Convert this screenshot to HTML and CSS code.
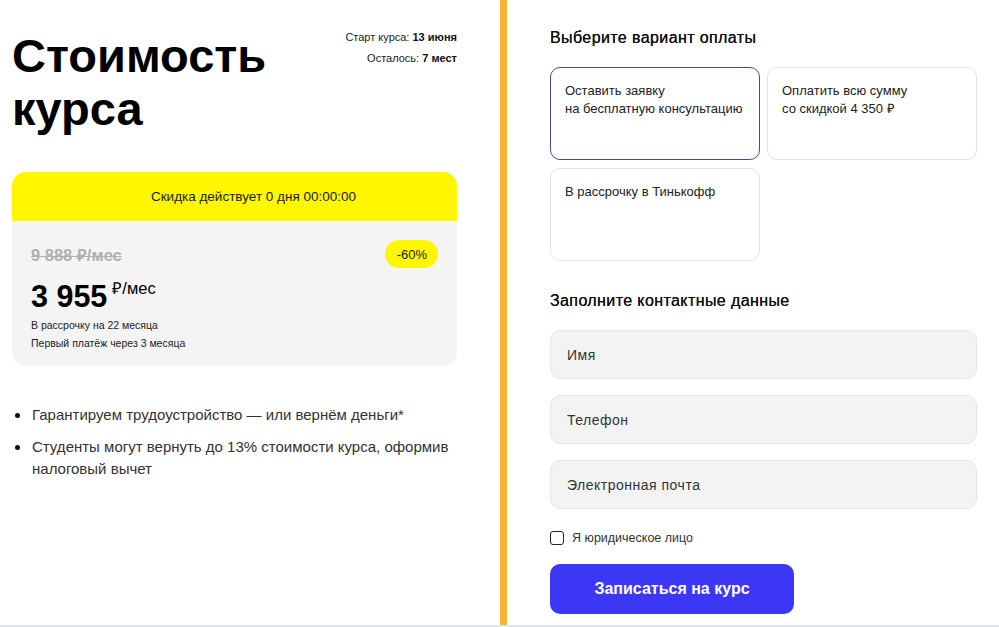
FILE: index.html
```html
<!DOCTYPE html>
<html lang="ru">
<head>
<meta charset="utf-8">
<title>Стоимость курса</title>
<link rel="stylesheet" href="styles.css">
</head>
<body>
<div class="page">
  <section class="left">
    <div class="head">
      <h1 class="title">Стоимость<br>курса</h1>
      <div class="info">
        <p>Старт курса: <b>13 июня</b></p>
        <p>Осталось: <b>7 мест</b></p>
      </div>
    </div>
    <div class="price-card">
      <div class="timer">Скидка действует 0 дня 00:00:00</div>
      <div class="price-body">
        <div class="old-row">
          <span class="old">9 888 ₽/мес</span>
          <span class="badge">-60%</span>
        </div>
        <div class="new"><span class="num">3 955</span><span class="unit">₽/мес</span></div>
        <p class="note">В рассрочку на 22 месяца</p>
        <p class="note">Первый платёж через 3 месяца</p>
      </div>
    </div>
    <ul class="perks">
      <li>Гарантируем трудоустройство — или вернём деньги*</li>
      <li>Студенты могут вернуть до 13% стоимости курса, оформив налоговый вычет</li>
    </ul>
  </section>
  <div class="divider"></div>
  <section class="right">
    <h2 class="sub">Выберите вариант оплаты</h2>
    <div class="options">
      <div class="opt active">Оставить заявку<br>на бесплатную консультацию</div>
      <div class="opt">Оплатить всю сумму<br>со скидкой 4 350 ₽</div>
      <div class="opt">В рассрочку в Тинькофф</div>
    </div>
    <h2 class="sub sub2">Заполните контактные данные</h2>
    <div class="fields">
      <div class="field">Имя</div>
      <div class="field">Телефон</div>
      <div class="field">Электронная почта</div>
    </div>
    <label class="check"><span class="box"></span>Я юридическое лицо</label>
    <button class="btn">Записаться на курс</button>
  </section>
</div>
<div class="footer-line"></div>
</body>
</html>
```
FILE: styles.css
```css
* { box-sizing: border-box; }
html, body { margin: 0; padding: 0; background: #fff; }
body {
  font-family: "Liberation Sans", Arial, sans-serif;
  color: #1a1a1a;
  width: 999px;
  height: 627px;
  overflow: hidden;
}
.page {
  display: flex;
  height: 625px;
}
.left {
  width: 500px;
  padding: 0 43px 0 12px;
}
.divider {
  width: 7px;
  background: #f8b42e;
}
.right {
  flex: 1;
  padding: 0 22px 0 43px;
}
.head {
  display: flex;
  justify-content: space-between;
  align-items: flex-start;
}
.title {
  margin: 29px 0 0 0;
  font-size: 47px;
  line-height: 53px;
  font-weight: 700;
  color: #000;
}
.info {
  margin-top: 27px;
  text-align: right;
  font-size: 11px;
  line-height: 21px;
  color: #222;
}
.info p { margin: 0; }
.info b { font-weight: 700; color: #111; }
.price-card {
  margin-top: 37px;
  border-radius: 14px;
  overflow: hidden;
  background: #f4f4f4;
}
.timer {
  height: 49px;
  background: #fff700;
  display: flex;
  align-items: center;
  justify-content: center;
  font-size: 13.5px;
  color: #1a1a1a;
  padding: 0 0 1px 38px;
}
.price-body {
  padding: 19px 19px 14px 19px;
}
.old-row {
  display: flex;
  justify-content: space-between;
  align-items: center;
  height: 28px;
}
.old {
  font-size: 16.5px;
  font-weight: 700;
  color: #b0b0b0;
  text-decoration: line-through;
  text-decoration-thickness: 1px;
}
.badge {
  background: #fff700;
  border-radius: 14px;
  height: 28px;
  padding: 0 11px 0 12px;
  display: flex;
  align-items: center;
  font-size: 13px;
  color: #1a1a1a;
}
.new {
  margin-top: 9px;
  display: flex;
  align-items: flex-start;
  height: 39px;
}
.num {
  font-size: 30.5px;
  line-height: 39px;
  font-weight: 700;
  color: #000;
}
.unit {
  font-size: 16.5px;
  line-height: 20px;
  margin-left: 5px;
  margin-top: 1px;
  color: #000;
}
.note {
  margin: 0;
  font-size: 10.5px;
  line-height: 18px;
  color: #222;
}
.perks {
  list-style: none;
  margin: 38px 0 0 0;
  padding: 0 0 0 20px;
  font-size: 15px;
  line-height: 22px;
  color: #333;
}
.perks li {
  margin-bottom: 10px;
  position: relative;
}
.perks li::before {
  content: "";
  position: absolute;
  left: -17px;
  top: 9px;
  width: 5px;
  height: 5px;
  border-radius: 50%;
  background: #111;
}
.sub {
  margin: 28px 0 0 0;
  font-size: 16px;
  line-height: 20px;
  font-weight: 500;
  color: #111;
  letter-spacing: 0.4px;
  text-shadow: 0 0 0.3px #111;
}
.options {
  margin-top: 19px;
  display: grid;
  grid-template-columns: 210px 210px;
  grid-auto-rows: 93px;
  gap: 8px 7px;
}
.opt {
  border: 1px solid #e3e3e3;
  border-radius: 10px;
  padding: 14px 14px;
  font-size: 13px;
  line-height: 18px;
  color: #222;
}
.opt.active { border-color: #4d45a6; }
.sub2 { margin-top: 30px; }
.fields {
  margin-top: 19px;
  display: flex;
  flex-direction: column;
  gap: 16px;
}
.field {
  height: 49px;
  background: #f3f3f3;
  border: 1px solid #e7e7e7;
  border-radius: 10px;
  display: flex;
  align-items: center;
  padding-left: 16px;
  font-size: 14px;
  color: #333;
  letter-spacing: 0.5px;
}
.check {
  margin-top: 21px;
  display: flex;
  align-items: center;
  font-size: 12.5px;
  color: #333;
  height: 15px;
}
.box {
  width: 14px;
  height: 14px;
  border: 1.5px solid #222;
  border-radius: 3px;
  margin-right: 8px;
  background: #fff;
}
.btn {
  margin-top: 19px;
  width: 244px;
  height: 50px;
  border: 0;
  border-radius: 10px;
  background: #3c37f5;
  color: #fff;
  font-family: "Liberation Sans", Arial, sans-serif;
  font-size: 16px;
  font-weight: 700;
  display: block;
}
.footer-line {
  height: 2px;
  background: #e2e7eb;
}
```
